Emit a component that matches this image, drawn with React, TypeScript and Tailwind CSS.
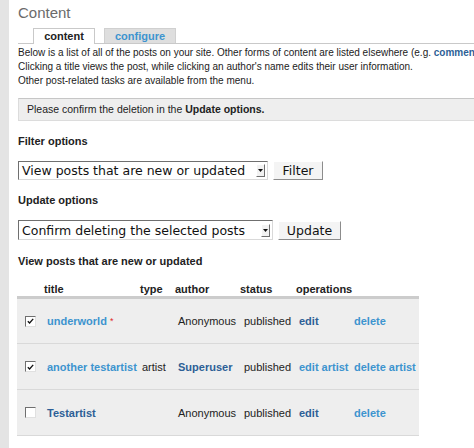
import React from "react";

const sans = "font-['Liberation_Sans',Arial,sans-serif]";
const dejavu = "font-['DejaVu_Sans',Verdana,sans-serif]";

type Post = {
  title: string;
  visited: boolean;
  isNew?: boolean;
  type: string;
  author: string;
  authorLink?: boolean;
  edit: string;
  del: string;
  editVisited?: boolean;
  checked: boolean;
};

const posts: Post[] = [
  {
    title: "underworld",
    visited: false,
    isNew: true,
    type: "",
    author: "Anonymous",
    edit: "edit",
    del: "delete",
    editVisited: true,
    checked: true,
  },
  {
    title: "another testartist",
    visited: false,
    type: "artist",
    author: "Superuser",
    authorLink: true,
    edit: "edit artist",
    del: "delete artist",
    checked: true,
  },
  {
    title: "Testartist",
    visited: true,
    type: "",
    author: "Anonymous",
    edit: "edit",
    del: "delete",
    editVisited: true,
    checked: false,
  },
];

function FakeSelect({ label, width, height }: { label: string; width: string; height: string }) {
  return (
    <div
      className={`flex items-center border-t border-l border-t-[#6f6f6f] border-l-[#6f6f6f] border-b border-r border-b-[#d9d9d9] border-r-[#d9d9d9] bg-white pl-[3px] pr-[2px] ${width} ${height}`}
    >
      <span className={`flex-1 whitespace-nowrap text-[12.5px] leading-[17px] text-[#111] ${dejavu}`}>
        {label}
      </span>
      <span className="flex h-[13px] w-[9px] items-center justify-center border-t border-l border-t-white border-l-white border-b border-r border-b-[#6f6f6f] border-r-[#6f6f6f] bg-[#f2f2f2]">
        <svg width="5" height="3" viewBox="0 0 5 3" aria-hidden="true">
          <path d="M0 0h5L2.5 3z" fill="#111" />
        </svg>
      </span>
    </div>
  );
}

function FakeButton({ label, width, height }: { label: string; width: string; height: string }) {
  return (
    <div
      className={`flex items-center justify-center border-t border-l border-t-white border-l-white border-b border-r border-b-[#8c8c8c] border-r-[#8c8c8c] bg-[#f4f4f4] text-[12.5px] leading-[17px] text-[#111] ${dejavu} ${width} ${height}`}
    >
      {label}
    </div>
  );
}

function Checkbox({ checked }: { checked: boolean }) {
  return (
    <span className="flex h-[11px] w-[11px] items-center justify-center border-t border-l border-t-[#6f6f6f] border-l-[#6f6f6f] border-b border-r border-b-[#e0e0e0] border-r-[#e0e0e0] bg-white">
      {checked ? (
        <svg width="7" height="6" viewBox="0 0 7 6" aria-hidden="true">
          <path d="M0.8 3.2 2.6 5 6.2 0.8" fill="none" stroke="#111" strokeWidth="1.3" />
        </svg>
      ) : null}
    </span>
  );
}

export default function App() {
  return (
    <div className={`flex h-[448px] w-[474px] overflow-hidden bg-white text-[#222] ${sans}`}>
      <div className="w-[9px] shrink-0 bg-[#e4e4e4]" />

      <main className="w-[620px] shrink-0 pl-[9px]">
        <h1 className="pt-[3px] text-[15px] leading-[20px] text-[#6b6b6b]">Content</h1>

        <div className="mt-[5px] flex h-[16px] items-end border-b border-[#c9c9c9] pl-[15px]">
          <span className="-mb-px flex h-[16px] w-[62px] items-center justify-center border border-b-0 border-[#c9c9c9] bg-white text-[11px] font-bold text-[#222]">
            content
          </span>
          <span className="ml-[9px] flex h-[15px] w-[72px] items-center justify-center border border-b-0 border-[#d0d0d0] bg-[#dedede] text-[11px] font-bold text-[#3d94cf]">
            configure
          </span>
        </div>

        <p className="whitespace-nowrap pt-[2px] text-[10px] leading-[14px]">
          Below is a list of all of the posts on your site. Other forms of content are listed
          elsewhere (e.g. <a className="font-bold text-[#2d5f96]">comments</a>).
          <br />
          Clicking a title views the post, while clicking an author&apos;s name edits their user
          information.
          <br />
          Other post-related tasks are available from the menu.
        </p>

        <div className="mt-[10px] flex h-[23px] items-center border border-[#dcdcdc] border-t-[#c6c6c6] bg-[#eeeeee] pl-[8px] text-[10.5px]">
          Please confirm the deletion in the&nbsp;<span className="font-bold">Update options.</span>
        </div>

        <h2 className="mt-[13px] text-[11px] font-bold leading-[14px]">Filter options</h2>
        <div className="mt-[13px] flex items-center gap-[5px]">
          <FakeSelect label="View posts that are new or updated" width="w-[250px]" height="h-[19px]" />
          <FakeButton label="Filter" width="w-[50px]" height="h-[19px]" />
        </div>

        <h2 className="mt-[13px] text-[11px] font-bold leading-[14px]">Update options</h2>
        <div className="mt-[13px] flex items-center gap-[5px]">
          <FakeSelect label="Confirm deleting the selected posts" width="w-[255px]" height="h-[20px]" />
          <FakeButton label="Update" width="w-[63px]" height="h-[19px]" />
        </div>

        <h2 className="mt-[14px] text-[11px] font-bold leading-[14px]">
          View posts that are new or updated
        </h2>

        <table className="mt-[14px] -ml-px w-[402px] table-fixed border-collapse text-[11px]">
          <colgroup>
            <col className="w-[27px]" />
            <col className="w-[96px]" />
            <col className="w-[35px]" />
            <col className="w-[65px]" />
            <col className="w-[56px]" />
            <col className="w-[55px]" />
            <col className="w-[68px]" />
          </colgroup>
          <thead>
            <tr className="h-[15px] border-b-[3px] border-[#cccccc] text-left leading-[14px]">
              <th />
              <th className="font-bold">title</th>
              <th className="font-bold">type</th>
              <th className="font-bold">author</th>
              <th className="font-bold">status</th>
              <th className="font-bold" colSpan={2}>
                operations
              </th>
            </tr>
          </thead>
          <tbody>
            {posts.map((post) => (
              <tr key={post.title} className="h-[46px] border-b border-[#d9d9d9] bg-[#eeeeee] leading-[14px]">
                <td className="pl-[8px]">
                  <Checkbox checked={post.checked} />
                </td>
                <td className="whitespace-nowrap pl-[3px]">
                  <a className={`font-bold ${post.visited ? "text-[#2d5f96]" : "text-[#3d94cf]"}`}>
                    {post.title}
                  </a>
                  {post.isNew ? <span className="ml-[3px] align-top text-[9px] text-[#e0282c]">*</span> : null}
                </td>
                <td className="pl-[2px]">{post.type}</td>
                <td className="pl-[3px]">
                  {post.authorLink ? (
                    <a className="font-bold text-[#2d5f96]">{post.author}</a>
                  ) : (
                    post.author
                  )}
                </td>
                <td className="pl-[4px]">published</td>
                <td className="whitespace-nowrap pl-[3px]">
                  <a className={`font-bold ${post.editVisited ? "text-[#2d5f96]" : "text-[#3d94cf]"}`}>
                    {post.edit}
                  </a>
                </td>
                <td className="whitespace-nowrap pl-[3px]">
                  <a className="font-bold text-[#3d94cf]">{post.del}</a>
                </td>
              </tr>
            ))}
          </tbody>
        </table>
      </main>
    </div>
  );
}
